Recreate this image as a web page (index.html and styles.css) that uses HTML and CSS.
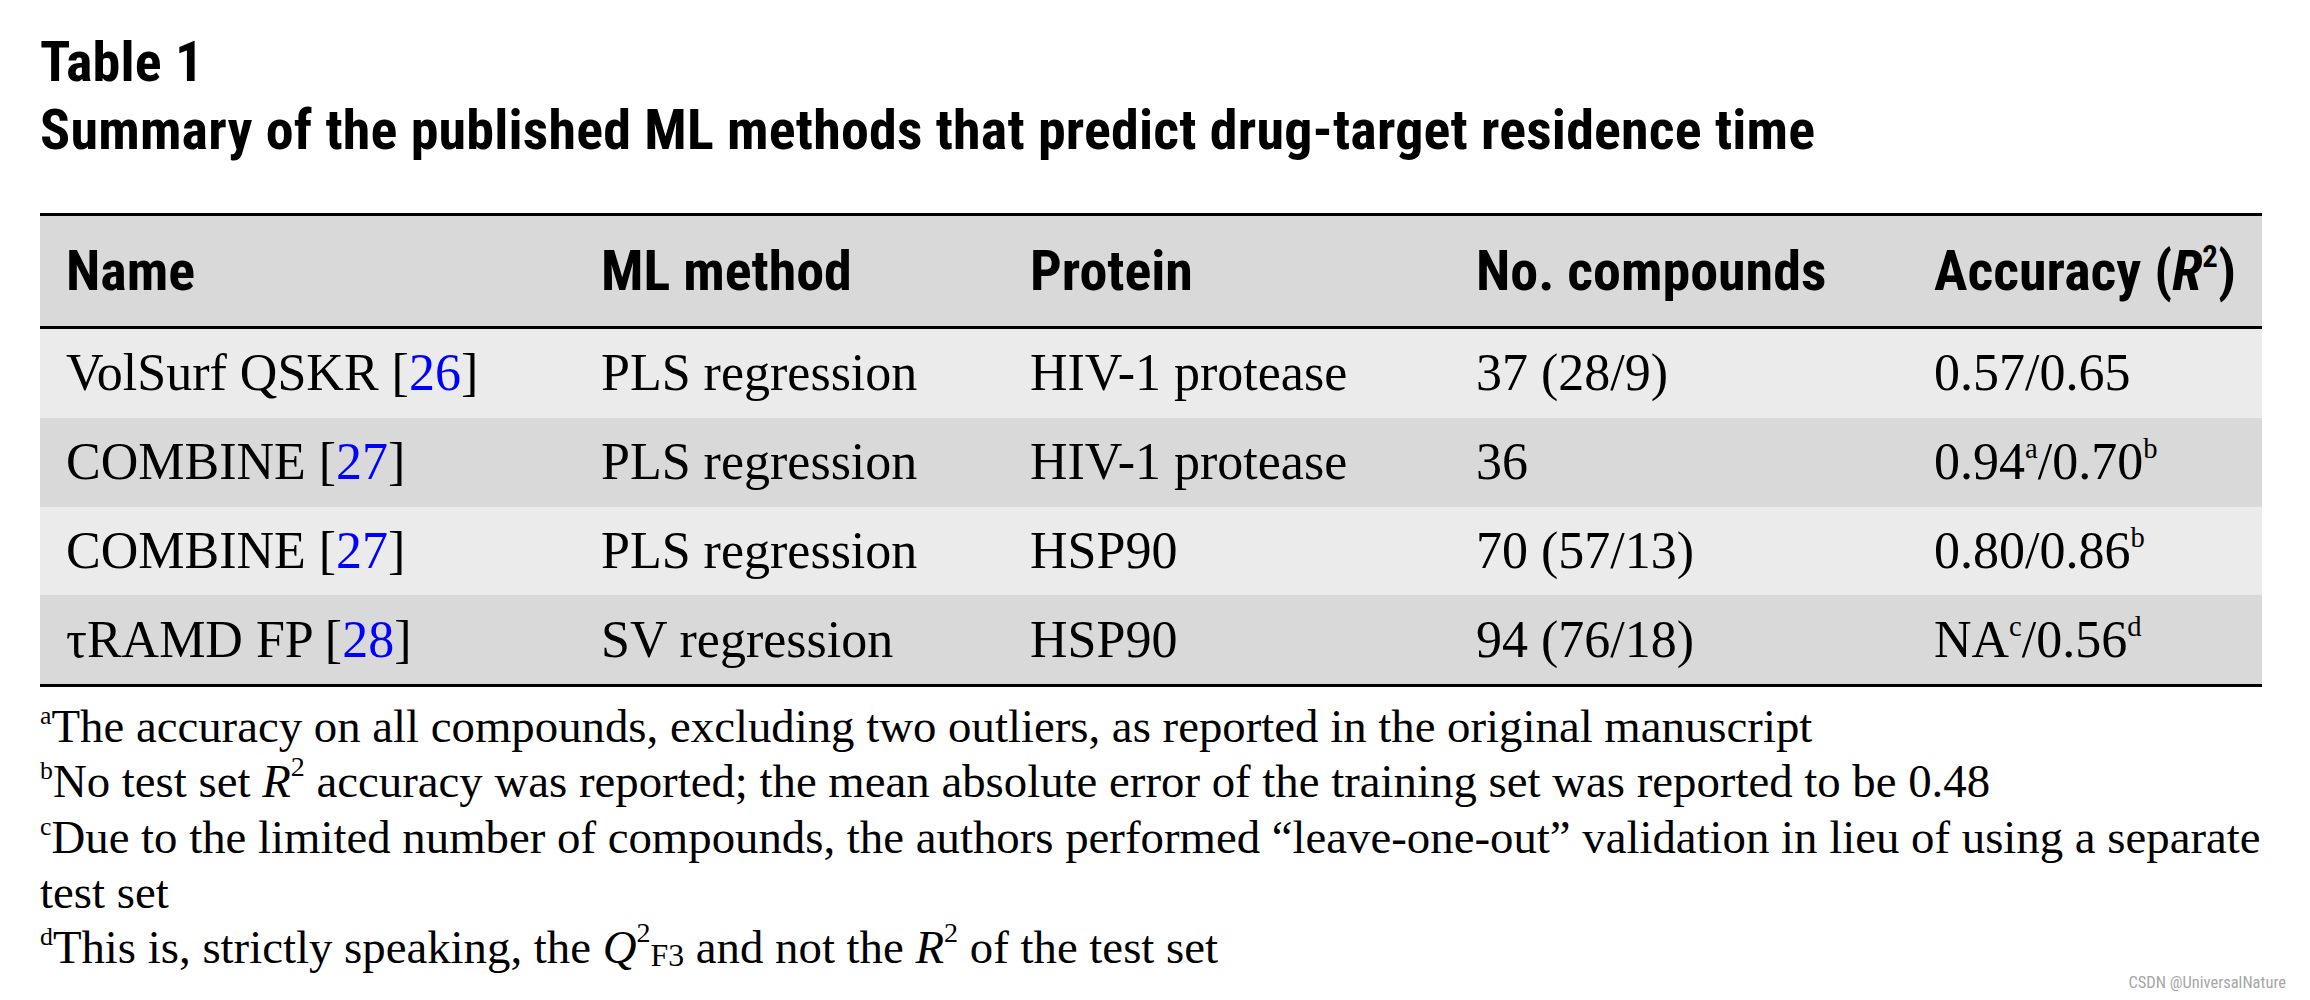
FILE: index.html
```html
<!DOCTYPE html>
<html lang="en">
<head>
<meta charset="utf-8">
<title>Table 1</title>
<link rel="stylesheet" href="styles.css">
</head>
<body>
<div class="page">
  <div class="caption">
    <div class="caption-line">Table 1</div>
    <div class="caption-line">Summary of the published ML methods that predict drug-target residence time</div>
  </div>

  <div class="table">
    <div class="row head">
      <div class="cell">Name</div>
      <div class="cell">ML method</div>
      <div class="cell">Protein</div>
      <div class="cell">No. compounds</div>
      <div class="cell">Accuracy (<i>R</i><sup class="hsup">2</sup>)</div>
    </div>
    <div class="row light">
      <div class="cell">VolSurf QSKR [<span class="ref">26</span>]</div>
      <div class="cell">PLS regression</div>
      <div class="cell">HIV-1 protease</div>
      <div class="cell">37 (28/9)</div>
      <div class="cell">0.57/0.65</div>
    </div>
    <div class="row dark">
      <div class="cell">COMBINE [<span class="ref">27</span>]</div>
      <div class="cell">PLS regression</div>
      <div class="cell">HIV-1 protease</div>
      <div class="cell">36</div>
      <div class="cell">0.94<sup class="fn">a</sup>/0.70<sup class="fn">b</sup></div>
    </div>
    <div class="row light">
      <div class="cell">COMBINE [<span class="ref">27</span>]</div>
      <div class="cell">PLS regression</div>
      <div class="cell">HSP90</div>
      <div class="cell">70 (57/13)</div>
      <div class="cell">0.80/0.86<sup class="fn">b</sup></div>
    </div>
    <div class="row dark">
      <div class="cell">τRAMD FP [<span class="ref">28</span>]</div>
      <div class="cell">SV regression</div>
      <div class="cell">HSP90</div>
      <div class="cell">94 (76/18)</div>
      <div class="cell">NA<sup class="fn">c</sup>/0.56<sup class="fn">d</sup></div>
    </div>
  </div>

  <div class="notes">
    <p class="note"><sup class="nfn">a</sup>The accuracy on all compounds, excluding two outliers, as reported in the original manuscript</p>
    <p class="note"><sup class="nfn">b</sup>No test set <i>R</i><sup class="pow">2</sup> accuracy was reported; the mean absolute error of the training set was reported to be 0.48</p>
    <p class="note"><sup class="nfn">c</sup>Due to the limited number of compounds, the authors performed “leave-one-out” validation in lieu of using a separate test set</p>
    <p class="note"><sup class="nfn">d</sup>This is, strictly speaking, the <i>Q</i><sup class="pow">2</sup><sub class="sub">F3</sub> and not the <i>R</i><sup class="pow">2</sup> of the test set</p>
  </div>

  <div class="watermark">CSDN @UniversalNature</div>
</div>
</body>
</html>
```

FILE: styles.css
```css
html, body {
  margin: 0;
  padding: 0;
  background: #ffffff;
}

.page {
  position: relative;
  width: 2310px;
  height: 1000px;
  box-sizing: border-box;
  padding: 28px 0 0 40px;
  color: #000;
}

.caption {
  font-family: "Roboto Condensed", "Liberation Sans", Arial, sans-serif;
  font-weight: bold;
  font-size: 56px;
  letter-spacing: 0.2px;
  line-height: 68px;
}

.table {
  margin-top: 49px;
  width: 2222px;
  border-top: 3px solid #000;
  border-bottom: 3px solid #000;
}

.row {
  display: grid;
  grid-template-columns: 535px 429px 446px 458px 1fr;
  align-items: center;
}

.cell {
  padding-left: 26px;
  white-space: nowrap;
}

.head {
  height: 110px;
  background: #d9d9d9;
  border-bottom: 3px solid #000;
  font-family: "Roboto Condensed", "Liberation Sans", Arial, sans-serif;
  font-weight: bold;
  font-size: 56px;
  line-height: 60px;
}

.hsup {
  font-size: 0.55em;
  vertical-align: 0.75em;
  line-height: 0;
}

.light, .dark {
  height: 88.75px;
  font-family: "Liberation Serif", "Times New Roman", serif;
  font-size: 52px;
  line-height: 60px;
}

.light { background: #ebebeb; }
.dark { background: #d9d9d9; }

.ref { color: #0000ff; }

.fn {
  font-size: 0.55em;
  vertical-align: 0.72em;
  line-height: 0;
}

.notes {
  margin-top: 12px;
  width: 2222px;
  font-family: "Liberation Serif", "Times New Roman", serif;
  font-size: 46.8px;
  line-height: 55.3px;
}

.note {
  margin: 0;
}

.nfn {
  font-size: 0.55em;
  vertical-align: 0.7em;
  line-height: 0;
}

.pow {
  font-size: 0.6em;
  vertical-align: 0.75em;
  line-height: 0;
}

.sub {
  font-size: 0.68em;
  vertical-align: -0.08em;
  line-height: 0;
}

.watermark {
  position: absolute;
  right: 24px;
  bottom: 8px;
  font-family: "Roboto Condensed", "Liberation Sans", Arial, sans-serif;
  font-size: 16.5px;
  color: #a6a6a6;
}
```
